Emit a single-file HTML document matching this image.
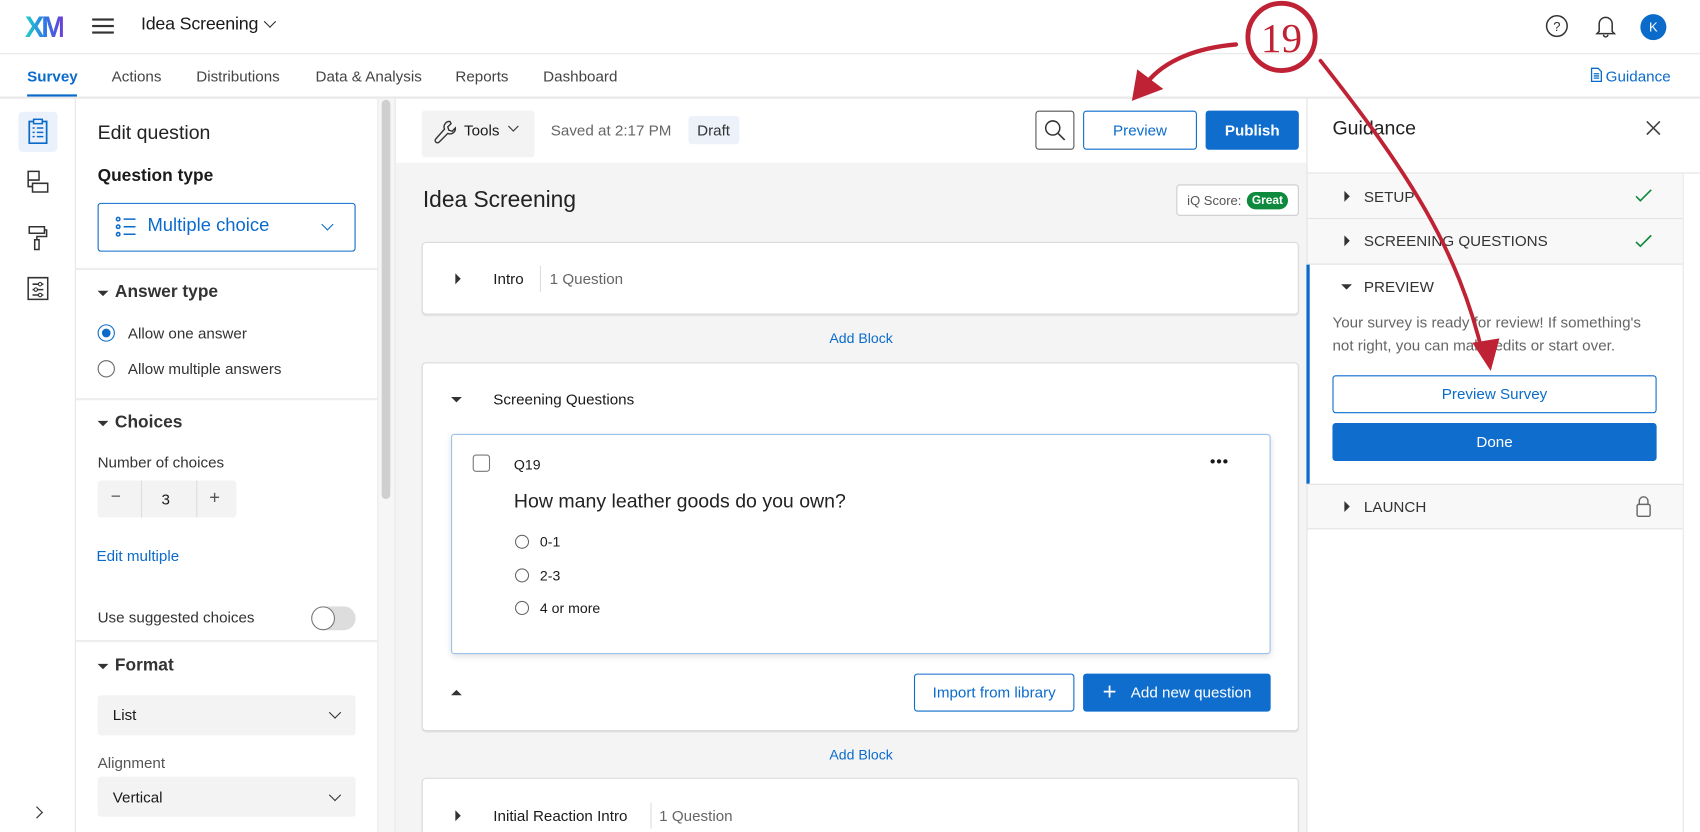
<!DOCTYPE html>
<html><head><meta charset="utf-8"><style>
*{box-sizing:border-box;margin:0;padding:0}
html,body{width:1700px;height:832px;overflow:hidden;background:#fff;font-family:"Liberation Sans",sans-serif;color:#1a1a1a}
#w{position:absolute;left:0;top:0;width:1568px;height:767px;transform:scale(1.08418,1.0847);transform-origin:0 0;overflow:hidden}
.a{position:absolute;white-space:nowrap}
.b{position:absolute}
.blue{color:#0b6bcb}
.tri-r{width:0;height:0;border-top:5px solid transparent;border-bottom:5px solid transparent;border-left:5px solid #333;position:absolute}
.tri-d{width:0;height:0;border-left:5px solid transparent;border-right:5px solid transparent;border-top:5px solid #333;position:absolute}
.tri-u{width:0;height:0;border-left:5px solid transparent;border-right:5px solid transparent;border-bottom:5px solid #333;position:absolute}
.chev{position:absolute;width:8px;height:8px;border-right:1.5px solid #333;border-bottom:1.5px solid #333;transform:rotate(45deg)}
.radio{position:absolute;width:13px;height:13px;border:1px solid #666;border-radius:50%}
.card{position:absolute;background:#fff;border:1px solid #dcdcdc;border-radius:4px;box-shadow:0 1px 1px rgba(0,0,0,.08)}
.sec{position:absolute;left:1206px;width:346px;height:42px;background:#f8f8f8;border-bottom:1px solid #e2e2e2;font-size:14px}
</style></head><body><div id="w">
<!-- top bar -->
<div class="a" style="left:23px;top:10px;font-size:27px;font-weight:bold;letter-spacing:-3px;background:linear-gradient(90deg,#21d3c8,#2c7be5,#6b3fd6);-webkit-background-clip:text;color:transparent">XM</div>
<div class="b" style="left:85px;top:17px;width:20px;height:2px;background:#333"></div>
<div class="b" style="left:85px;top:23px;width:20px;height:2px;background:#333"></div>
<div class="b" style="left:85px;top:29px;width:20px;height:2px;background:#333"></div>
<div class="a" style="left:130px;top:13px;font-size:16.5px;letter-spacing:-0.2px">Idea Screening</div>
<div class="chev" style="left:245px;top:16px"></div>
<svg class="b" style="left:1425px;top:13px" width="22" height="22"><circle cx="11" cy="11" r="9.5" fill="none" stroke="#333" stroke-width="1.4"/><text x="11" y="15.5" font-size="12" text-anchor="middle" fill="#333" font-family="Liberation Sans">?</text></svg>
<svg class="b" style="left:1471px;top:12px" width="20" height="24"><path d="M4 17V10a6 6 0 0 1 12 0v7l2 2H2z M8 20a2 2 0 0 0 4 0" fill="none" stroke="#333" stroke-width="1.4"/></svg>
<div class="b" style="left:1513px;top:13px;width:24px;height:24px;border-radius:50%;background:#0b6bcb;color:#fff;font-size:12px;text-align:center;line-height:24px">K</div>
<div class="b" style="left:0;top:49px;width:1568px;height:1px;background:#e6e6e6"></div>
<!-- nav -->
<div class="a" style="left:25px;top:62px;font-size:14px;font-weight:bold;color:#0b6bcb">Survey</div>
<div class="b" style="left:25px;top:87px;width:46px;height:3px;background:#0b6bcb"></div>
<div class="a" style="left:103px;top:62px;font-size:14px;color:#444">Actions</div>
<div class="a" style="left:181px;top:62px;font-size:14px;color:#444">Distributions</div>
<div class="a" style="left:291px;top:62px;font-size:14px;color:#444">Data &amp; Analysis</div>
<div class="a" style="left:420px;top:62px;font-size:14px;color:#444">Reports</div>
<div class="a" style="left:501px;top:62px;font-size:14px;color:#444">Dashboard</div>
<svg class="b" style="left:1467px;top:62px" width="11" height="14"><path d="M1 1h6l3 3v9H1z M3 6h5M3 8h5M3 10h5" fill="none" stroke="#0b6bcb" stroke-width="1.2"/></svg>
<div class="a blue" style="left:1481px;top:62px;font-size:14px">Guidance</div>
<div class="b" style="left:0;top:89px;width:1568px;height:2px;background:#e8e8e8"></div>
<!-- left rail -->
<div class="b" style="left:69px;top:91px;width:1px;height:676px;background:#e6e6e6"></div>
<div class="b" style="left:17px;top:103px;width:36px;height:37px;background:#eaf1fb;border-radius:4px"></div>
<svg class="b" style="left:24px;top:108px" width="22" height="26"><path d="M3 4h16v20H3z" fill="none" stroke="#0b6bcb" stroke-width="1.6"/><rect x="7" y="2" width="8" height="4" fill="#eaf1fb" stroke="#0b6bcb" stroke-width="1.4"/><path d="M6 10h2M10 10h6M6 14h2M10 14h6M6 18h2M10 18h6" stroke="#0b6bcb" stroke-width="1.4"/></svg>
<svg class="b" style="left:24px;top:156px" width="22" height="24"><path d="M2 2h10v8H2zM2 10h10M6 13h14v8H6z" fill="none" stroke="#333" stroke-width="1.4"/><path d="M2 10v6h4" fill="none" stroke="#333" stroke-width="1.4"/></svg>
<svg class="b" style="left:24px;top:206px" width="22" height="26"><path d="M3 3h14v6H3zM17 6h2v6h-9v3M8 15h4v9H8z" fill="none" stroke="#333" stroke-width="1.4"/></svg>
<svg class="b" style="left:24px;top:254px" width="22" height="26"><path d="M2 2h18v20H2z M6 8h10M6 13h10M6 18h10" fill="none" stroke="#333" stroke-width="1.4"/><circle cx="13" cy="8" r="1.6" fill="#fff" stroke="#333"/><circle cx="9" cy="13" r="1.6" fill="#fff" stroke="#333"/><circle cx="13" cy="18" r="1.6" fill="#fff" stroke="#333"/></svg>
<div class="chev" style="left:30px;top:745px;transform:rotate(-45deg)"></div>
<!-- left panel -->
<div class="a" style="left:90px;top:112px;font-size:18px;color:#222">Edit question</div>
<div class="a" style="left:90px;top:154px;font-size:16px;font-weight:bold">Question type</div>
<div class="b" style="left:90px;top:187px;width:238px;height:45px;border:1px solid #0b6bcb;border-radius:3px"></div>
<svg class="b" style="left:106px;top:199px" width="20" height="20"><g fill="none" stroke="#0b6bcb" stroke-width="1.4"><circle cx="3" cy="3" r="1.6"/><circle cx="3" cy="10" r="1.6"/><circle cx="3" cy="17" r="1.6"/><path d="M8 3h11M8 10h11M8 17h11"/></g></svg>
<div class="a blue" style="left:136px;top:198px;font-size:17px">Multiple choice</div>
<div class="chev" style="left:298px;top:203px;border-color:#0b6bcb"></div>
<div class="b" style="left:70px;top:247px;width:278px;height:2px;background:#ededed"></div>
<div class="tri-d" style="left:90px;top:268px"></div>
<div class="a" style="left:106px;top:261px;font-size:16px;font-weight:bold;color:#333">Answer type</div>
<div class="radio" style="left:90px;top:299px;width:16px;height:16px;border-color:#0b6bcb"></div>
<div class="b" style="left:94px;top:303px;width:8px;height:8px;border-radius:50%;background:#0b6bcb"></div>
<div class="a" style="left:118px;top:299px;font-size:14px;color:#333">Allow one answer</div>
<div class="radio" style="left:90px;top:332px;width:16px;height:16px"></div>
<div class="a" style="left:118px;top:332px;font-size:14px;color:#333">Allow multiple answers</div>
<div class="b" style="left:70px;top:367px;width:278px;height:2px;background:#ededed"></div>
<div class="tri-d" style="left:90px;top:388px"></div>
<div class="a" style="left:106px;top:381px;font-size:16px;font-weight:bold;color:#333">Choices</div>
<div class="a" style="left:90px;top:418px;font-size:14px;color:#333">Number of choices</div>
<div class="b" style="left:90px;top:443px;width:128px;height:34px;background:#f3f3f3;border-radius:3px"></div>
<div class="b" style="left:130px;top:443px;width:1px;height:34px;background:#ddd"></div>
<div class="b" style="left:181px;top:443px;width:1px;height:34px;background:#ddd"></div>
<div class="a" style="left:102px;top:450px;font-size:16px;color:#555">−</div>
<div class="a" style="left:149px;top:452px;font-size:14px">3</div>
<div class="a" style="left:193px;top:449px;font-size:17px;color:#555">+</div>
<div class="a blue" style="left:89px;top:504px;font-size:14px">Edit multiple</div>
<div class="a" style="left:90px;top:561px;font-size:14px;color:#333">Use suggested choices</div>
<div class="b" style="left:287px;top:559px;width:41px;height:22px;border-radius:11px;background:#ddd"></div>
<div class="b" style="left:287px;top:559px;width:22px;height:22px;border-radius:50%;background:#fff;border:1px solid #777"></div>
<div class="b" style="left:70px;top:590px;width:278px;height:2px;background:#ededed"></div>
<div class="tri-d" style="left:90px;top:612px"></div>
<div class="a" style="left:106px;top:605px;font-size:16px;font-weight:bold;color:#333">Format</div>
<div class="b" style="left:90px;top:641px;width:238px;height:37px;background:#f3f3f3;border-radius:3px"></div>
<div class="a" style="left:104px;top:651px;font-size:14px">List</div>
<div class="chev" style="left:305px;top:653px"></div>
<div class="a" style="left:90px;top:695px;font-size:14px;color:#555">Alignment</div>
<div class="b" style="left:90px;top:716px;width:238px;height:37px;background:#f3f3f3;border-radius:3px"></div>
<div class="a" style="left:104px;top:727px;font-size:14px">Vertical</div>
<div class="chev" style="left:305px;top:729px"></div>
<div class="b" style="left:348px;top:91px;width:17px;height:676px;background:#f6f6f6;border-left:1px solid #eaeaea;border-right:1px solid #e6e6e6"></div>
<div class="b" style="left:352px;top:92px;width:8px;height:368px;background:#cfcfcf;border-radius:4px"></div>
<!-- main -->
<div class="b" style="left:365px;top:150px;width:840px;height:617px;background:#f4f4f4"></div>
<div class="b" style="left:389px;top:102px;width:104px;height:43px;background:#f3f3f3;border-radius:3px"></div>
<svg class="b" style="left:399px;top:110px" width="22" height="24"><path d="M16 2a5 5 0 0 0-5 7L3 18a2 2 0 0 0 3 3l8-8a5 5 0 0 0 7-5l-3 3-3-1-1-3 3-3z" fill="none" stroke="#333" stroke-width="1.3"/></svg>
<div class="a" style="left:428px;top:112px;font-size:14px">Tools</div>
<div class="chev" style="left:470px;top:113px;width:7px;height:7px"></div>
<div class="a" style="left:508px;top:112px;font-size:14px;color:#666">Saved at 2:17 PM</div>
<div class="b" style="left:635px;top:107px;width:47px;height:26px;background:#edf2fa;border-radius:3px"></div>
<div class="a" style="left:643px;top:112px;font-size:14px;color:#333">Draft</div>
<div class="b" style="left:955px;top:102px;width:36px;height:36px;border:1px solid #555;border-radius:3px"></div>
<svg class="b" style="left:962px;top:109px" width="22" height="22"><circle cx="9" cy="9" r="6.5" fill="none" stroke="#333" stroke-width="1.4"/><path d="M14 14l6 6" stroke="#333" stroke-width="1.5"/></svg>
<div class="b" style="left:999px;top:102px;width:105px;height:36px;border:1px solid #0b6bcb;border-radius:3px;color:#0b6bcb;font-size:14px;text-align:center;line-height:34px">Preview</div>
<div class="b" style="left:1112px;top:102px;width:86px;height:36px;background:#0f6ecd;border-radius:3px;color:#fff;font-size:14px;font-weight:bold;text-align:center;line-height:36px">Publish</div>
<div class="a" style="left:390px;top:173px;font-size:21px;color:#222">Idea Screening</div>
<div class="b" style="left:1085px;top:170px;width:113px;height:29px;background:#fff;border:1px solid #ccc;border-radius:3px"></div>
<div class="a" style="left:1095px;top:178px;font-size:12px;color:#555">iQ Score:</div>
<div class="b" style="left:1150px;top:177px;width:38px;height:16px;border-radius:8px;background:#0e8a3e;color:#fff;font-size:11px;font-weight:bold;text-align:center;line-height:16px">Great</div>
<div class="card" style="left:389px;top:223px;width:809px;height:67px"></div>
<div class="tri-r" style="left:420px;top:252px"></div>
<div class="a" style="left:455px;top:249px;font-size:14px">Intro</div>
<div class="b" style="left:498px;top:245px;width:1px;height:24px;background:#ddd"></div>
<div class="a" style="left:507px;top:249px;font-size:14px;color:#666">1 Question</div>
<div class="a blue" style="left:765px;top:304px;font-size:13px">Add Block</div>
<div class="card" style="left:389px;top:334px;width:809px;height:340px"></div>
<div class="tri-d" style="left:416px;top:366px"></div>
<div class="a" style="left:455px;top:360px;font-size:14px">Screening Questions</div>
<div class="b" style="left:416px;top:400px;width:756px;height:203px;background:#fff;border:1.5px solid #9cc2ec;border-radius:3px;box-shadow:0 2px 6px rgba(0,0,0,.12)"></div>
<div class="b" style="left:436px;top:419px;width:16px;height:16px;border:1px solid #777;border-radius:3px"></div>
<div class="a" style="left:474px;top:421px;font-size:13px">Q19</div>
<div class="a" style="left:1116px;top:417px;font-size:14px;font-weight:bold;letter-spacing:1px">•••</div>
<div class="a" style="left:474px;top:452px;font-size:18px;color:#222">How many leather goods do you own?</div>
<div class="radio" style="left:475px;top:493px"></div><div class="a" style="left:498px;top:492px;font-size:13px">0-1</div>
<div class="radio" style="left:475px;top:524px"></div><div class="a" style="left:498px;top:523px;font-size:13px">2-3</div>
<div class="radio" style="left:475px;top:554px"></div><div class="a" style="left:498px;top:553px;font-size:13px">4 or more</div>
<div class="tri-u" style="left:416px;top:636px"></div>
<div class="b" style="left:843px;top:621px;width:148px;height:35px;border:1px solid #0b6bcb;border-radius:3px;color:#0b6bcb;font-size:14px;text-align:center;line-height:33px">Import from library</div>
<div class="b" style="left:999px;top:621px;width:173px;height:35px;background:#0f6ecd;border-radius:3px;color:#fff;font-size:14px;line-height:35px;padding-left:44px">Add new question</div>
<div class="a" style="left:1017px;top:626px;font-size:22px;color:#fff;font-weight:300;line-height:24px">+</div>
<div class="a blue" style="left:765px;top:688px;font-size:13px">Add Block</div>
<div class="card" style="left:389px;top:717px;width:809px;height:70px"></div>
<div class="tri-r" style="left:420px;top:747px"></div>
<div class="a" style="left:455px;top:744px;font-size:14px">Initial Reaction Intro</div>
<div class="b" style="left:600px;top:740px;width:1px;height:24px;background:#ddd"></div>
<div class="a" style="left:608px;top:744px;font-size:14px;color:#666">1 Question</div>
<!-- right panel -->
<div class="b" style="left:1205px;top:91px;width:1px;height:676px;background:#e2e2e2"></div>
<div class="a" style="left:1229px;top:108px;font-size:18px;color:#222">Guidance</div>
<svg class="b" style="left:1518px;top:111px" width="14" height="14"><path d="M1 1l12 12M13 1L1 13" stroke="#444" stroke-width="1.5"/></svg>
<div class="b" style="left:1206px;top:159px;width:362px;height:1px;background:#e2e2e2"></div>
<div class="b" style="left:1552px;top:160px;width:1px;height:607px;background:#e6e6e6"></div>
<div class="sec" style="top:160px"></div><div class="tri-r" style="left:1240px;top:176px"></div><div class="a" style="left:1258px;top:173px;font-size:14px;color:#333">SETUP</div>
<svg class="b" style="left:1508px;top:173px" width="16" height="14"><path d="M1 8l4 4 10-10" fill="none" stroke="#0e8a3e" stroke-width="1.5"/></svg>
<div class="sec" style="top:202px"></div><div class="tri-r" style="left:1240px;top:217px"></div><div class="a" style="left:1258px;top:214px;font-size:14px;color:#333">SCREENING QUESTIONS</div>
<svg class="b" style="left:1508px;top:215px" width="16" height="14"><path d="M1 8l4 4 10-10" fill="none" stroke="#0e8a3e" stroke-width="1.5"/></svg>
<div class="b" style="left:1205px;top:244px;width:3px;height:202px;background:#0b6bcb"></div>
<div class="tri-d" style="left:1237px;top:262px"></div><div class="a" style="left:1258px;top:256px;font-size:14px;color:#333">PREVIEW</div>
<div class="a" style="left:1229px;top:287px;font-size:14px;color:#666;line-height:21px">Your survey is ready for review! If something's<br>not right, you can make edits or start over.</div>
<div class="b" style="left:1229px;top:346px;width:299px;height:35px;border:1px solid #0b6bcb;border-radius:3px;color:#0b6bcb;font-size:14px;text-align:center;line-height:33px">Preview Survey</div>
<div class="b" style="left:1229px;top:390px;width:299px;height:35px;background:#0f6ecd;border-radius:3px;color:#fff;font-size:14px;text-align:center;line-height:35px">Done</div>
<div class="sec" style="top:446px;border-top:1px solid #e2e2e2"></div><div class="tri-r" style="left:1240px;top:462px"></div><div class="a" style="left:1258px;top:459px;font-size:14px;color:#333">LAUNCH</div>
<svg class="b" style="left:1508px;top:456px" width="16" height="22"><path d="M4 9V6a4 4 0 0 1 8 0v3" fill="none" stroke="#666" stroke-width="1.3"/><rect x="2" y="9" width="12" height="11" rx="1.5" fill="none" stroke="#666" stroke-width="1.3"/></svg>
<!-- annotation -->
<svg class="b" style="left:0;top:0" width="1568" height="767">
<g fill="none" stroke="#bf2234" stroke-linecap="round">
<circle cx="1182" cy="34" r="31" stroke-width="4.5"/>
<path d="M1140 41C1105 44 1075 55 1058 76" stroke-width="4"/>
<path d="M1218 56C1300 160 1345 230 1368 328" stroke-width="3.5"/>
</g>
<path d="M1044 93L1049 64L1073 82Z" fill="#bf2234"/>
<path d="M1375 342L1358 316L1383 312Z" fill="#bf2234"/>
<text x="1182" y="48" font-size="38" text-anchor="middle" fill="#bf2234" font-family="Liberation Serif">19</text>
</svg>
</div></body></html>
